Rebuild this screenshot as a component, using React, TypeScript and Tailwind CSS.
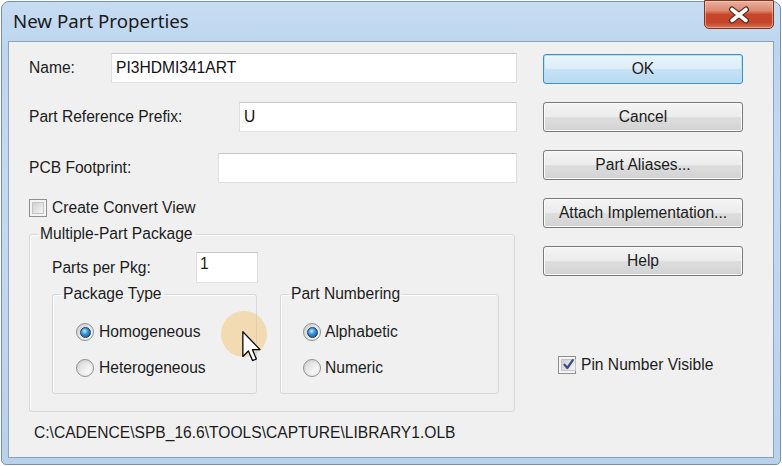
import React from "react";

function Field({ value, className }: { value?: string; className: string }) {
  return (
    <div
      className={
        "h-[30px] bg-white border border-[#dcdfe3] border-t-[#c5c9ce] flex items-center pl-[4px] text-[#111] " +
        className
      }
    >
      {value}
    </div>
  );
}

function Check({ checked }: { checked?: boolean }) {
  return (
    <span className="w-[18px] h-[18px] border border-[#8f8f8f] bg-[#f4f4f4] p-[2px] flex shrink-0">
      <span className="flex-1 bg-[linear-gradient(135deg,#cfcfcf,#f6f6f6)] border border-[#c4c4c4] flex items-center justify-center">
        {checked && (
          <svg width="13" height="13" viewBox="0 0 13 13">
            <path d="M2.5 6.8 L5.3 10 L10.8 2.2" fill="none" stroke="#3a4e8e" strokeWidth="2.3" strokeLinecap="round" strokeLinejoin="round" />
          </svg>
        )}
      </span>
    </span>
  );
}

function Radio({ on }: { on?: boolean }) {
  return (
    <span className="w-[18px] h-[18px] rounded-full border border-[#8e8f8f] bg-[linear-gradient(135deg,#cfcfcf,#fbfbfb)] flex items-center justify-center shrink-0">
      <span
        className={
          on
            ? "w-[11px] h-[11px] rounded-full border border-[#1e3f6c] bg-[radial-gradient(circle_at_40%_35%,#c5e9ff_0%,#3a97dd_40%,#0c3b78_100%)]"
            : "w-[12px] h-[12px] rounded-full bg-[linear-gradient(135deg,#dadada,#ffffff)]"
        }
      />
    </span>
  );
}

function Btn({ label, primary }: { label: string; primary?: boolean }) {
  return (
    <div
      className={
        primary
          ? "h-[30px] w-[200px] rounded-[3px] border border-[#3d8fcf] shadow-[inset_0_0_0_1px_#b4e0f8] bg-[linear-gradient(#eaf5fc_0%,#dcedf9_50%,#c6e2f5_50%,#b8daf2_100%)] flex items-center justify-center"
          : "h-[30px] w-[200px] rounded-[3px] border border-[#7a7a7a] shadow-[inset_0_0_0_1px_#fbfbfb] bg-[linear-gradient(#f4f4f4_0%,#ececec_50%,#dedede_50%,#d2d2d2_100%)] flex items-center justify-center"
      }
    >
      {label}
    </div>
  );
}

export default function App() {
  return (
    <div className="w-[782px] h-[466px] bg-white relative overflow-hidden font-['Liberation_Sans',Arial,sans-serif] text-[15.6px] text-[#1c1c1c]">
      <div className="ml-[1px] mt-[1px] w-[780px] h-[464px] rounded-t-[8px] rounded-b-[5px] border border-[#7890ab] bg-[linear-gradient(180deg,#c6dcf2_0%,#bdd6ef_10%,#c3daf2_40%,#b9d2ec_100%)] flex flex-col">
        {/* Title bar */}
        <div className="h-[39px] flex items-start shrink-0">
          <span className="ml-[11px] mt-[6px] font-['Noto_Sans',sans-serif] text-[18.7px] leading-[26px] text-[#1b1b1b]">
            New Part Properties
          </span>
          <div className="ml-auto mr-[6px] -mt-[2px] w-[70px] h-[29px] rounded-b-[5px] border border-[#7b3524] bg-[linear-gradient(180deg,#eab1a0_0%,#dc8a72_35%,#c9462a_50%,#c3452b_80%,#d8714f_100%)] shadow-[inset_0_0_0_1px_rgba(255,220,200,0.5)] flex items-center justify-center">
            <svg width="24" height="18" viewBox="0 0 24 18">
              <path d="M5 3.5 L19 14.5 M19 3.5 L5 14.5" stroke="#5a2418" strokeWidth="6" strokeLinecap="round" />
              <path d="M5 3.5 L19 14.5 M19 3.5 L5 14.5" stroke="#ffffff" strokeWidth="3.6" strokeLinecap="round" />
            </svg>
          </div>
        </div>

        {/* Client area */}
        <div className="mx-[6px] h-[417px] border border-[#8da2ba] bg-[#f0f0f0] flex">
          {/* Left column */}
          <div className="ml-[20px] w-[488px] flex flex-col">
            <div className="mt-[11px] flex items-center">
              <span className="w-[82px]">Name:</span>
              <Field value="PI3HDMI341ART" className="flex-1" />
            </div>
            <div className="mt-[19px] flex items-center">
              <span className="w-[210px]">Part Reference Prefix:</span>
              <Field value="U" className="flex-1" />
            </div>
            <div className="mt-[21px] flex items-center">
              <span className="w-[189px]">PCB Footprint:</span>
              <Field className="flex-1" />
            </div>
            <div className="mt-[16px] flex items-center gap-[5px] h-[18px]">
              <Check />
              <span>Create Convert View</span>
            </div>

            <fieldset className="mt-[8px] w-[486px] h-[187px] border border-[#d3d9de] rounded-[3px] shadow-[inset_1px_1px_0_#ffffff] flex flex-col">
              <legend className="ml-[8px] px-[2px] leading-[18px]">Multiple-Part Package</legend>
              <div className="mt-[9px] ml-[22px] flex items-center">
                <span className="w-[144px]">Parts per Pkg:</span>
                <div className="h-[31px] w-[62px] bg-white border border-[#dcdfe3] border-t-[#c5c9ce] pl-[3px] leading-[22px]">1</div>
              </div>
              <div className="mt-[2px] ml-[22px] flex gap-[23px]">
                <fieldset className="w-[205px] h-[109px] border border-[#d3d9de] rounded-[3px] shadow-[inset_1px_1px_0_#ffffff] flex flex-col">
                  <legend className="ml-[8px] px-[2px] leading-[18px]">Package Type</legend>
                  <div className="mt-[19px] ml-[23px] flex items-center gap-[5px] h-[20px]">
                    <Radio on />
                    <span>Homogeneous</span>
                  </div>
                  <div className="mt-[16px] ml-[23px] flex items-center gap-[5px] h-[20px]">
                    <Radio />
                    <span>Heterogeneous</span>
                  </div>
                </fieldset>
                <fieldset className="w-[219px] h-[109px] border border-[#d3d9de] rounded-[3px] shadow-[inset_1px_1px_0_#ffffff] flex flex-col">
                  <legend className="ml-[8px] px-[2px] leading-[18px]">Part Numbering</legend>
                  <div className="mt-[19px] ml-[22px] flex items-center gap-[4px] h-[20px]">
                    <Radio on />
                    <span>Alphabetic</span>
                  </div>
                  <div className="mt-[16px] ml-[22px] flex items-center gap-[4px] h-[20px]">
                    <Radio />
                    <span>Numeric</span>
                  </div>
                </fieldset>
              </div>
            </fieldset>

            <div className="mt-[12px] ml-[5px] leading-[18px]">C:\CADENCE\SPB_16.6\TOOLS\CAPTURE\LIBRARY1.OLB</div>
          </div>

          {/* Right column */}
          <div className="ml-[26px] w-[200px] pt-[12px] flex flex-col gap-[18px]">
            <Btn label="OK" primary />
            <Btn label="Cancel" />
            <Btn label="Part Aliases..." />
            <Btn label="Attach Implementation..." />
            <Btn label="Help" />
            <div className="mt-[61px] ml-[15px] flex items-center gap-[5px] h-[19px]">
              <Check checked />
              <span>Pin Number Visible</span>
            </div>
          </div>
        </div>
      </div>

      {/* Cursor highlight and pointer */}
      <div className="absolute left-[221px] top-[311px] w-[46px] h-[46px] rounded-full bg-[rgba(243,196,118,0.5)]" />
      <svg className="absolute left-[242px] top-[331px]" width="20" height="31" viewBox="0 0 12.5 19.5">
        <path d="M0.5 0.5 L0.5 16 L4 12.6 L6.6 18.6 L9 17.6 L6.5 11.7 L11.3 11.7 Z" fill="#ffffff" stroke="#000000" strokeWidth="0.8" strokeLinejoin="round" />
      </svg>
    </div>
  );
}
